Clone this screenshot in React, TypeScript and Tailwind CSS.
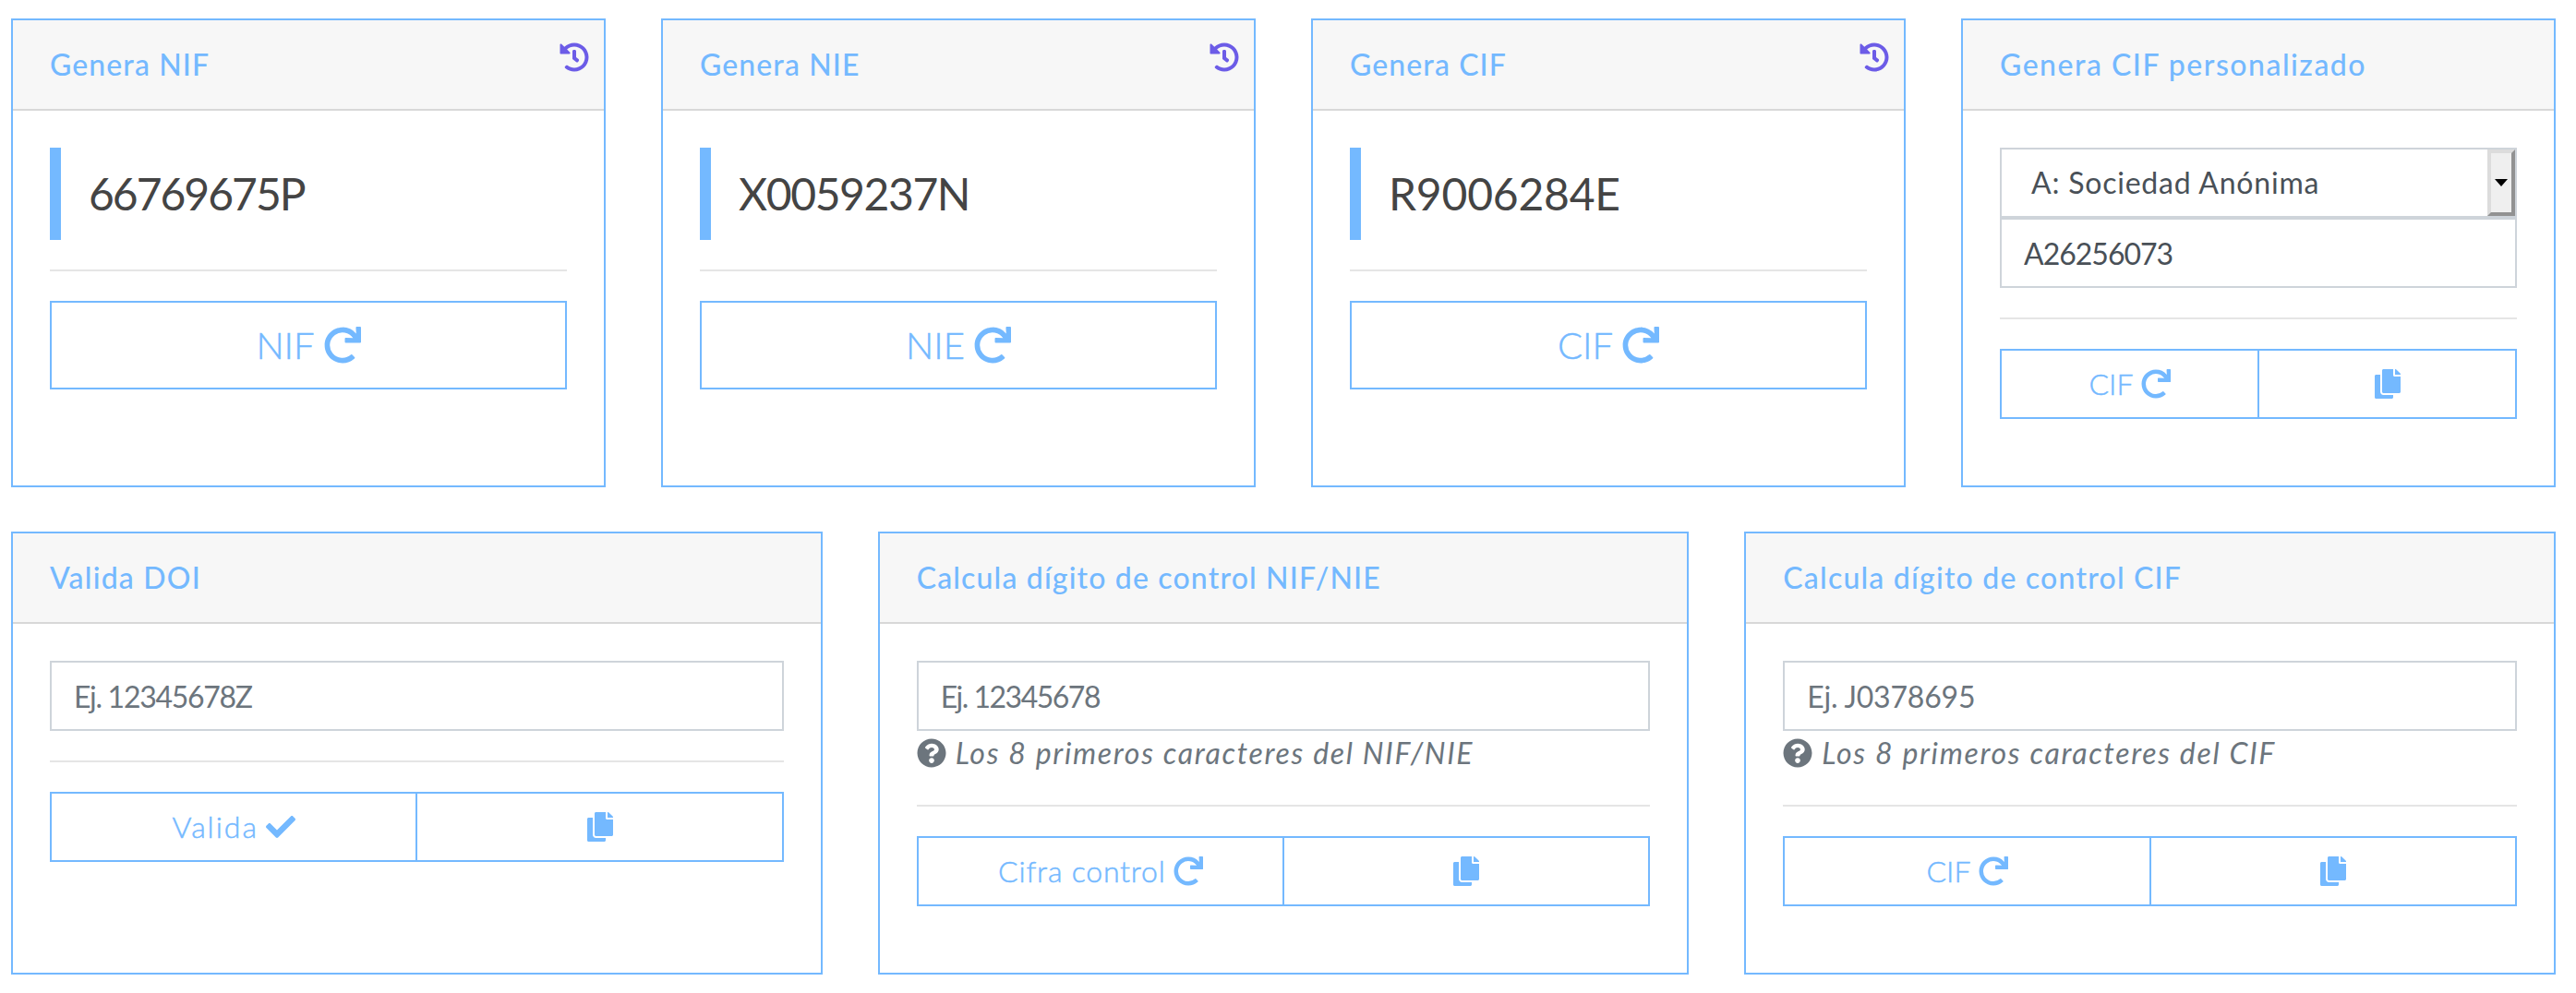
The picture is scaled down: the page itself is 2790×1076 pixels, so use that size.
import type { ReactNode } from 'react'
import { FaCheck, FaCopy, FaHistory, FaQuestionCircle, FaRedo } from 'react-icons/fa'

interface CardProps {
  title: string
  titleClass?: string
  history?: boolean
  children: ReactNode
}

function Card({ title, titleClass = 'tracking-[1.1px]', history = false, children }: CardProps) {
  return (
    <section className="relative min-w-0 flex-1 border-2 border-[#74b9ff] bg-white">
      <header className="flex h-[98px] items-center border-b-2 border-[#d8d8d8] bg-[#f7f7f7] px-10">
        <h2 className={`text-[32px] font-medium whitespace-nowrap text-[#74b9ff] ${titleClass}`}>{title}</h2>
      </header>
      {history && (
        <button className="absolute top-6 right-4 text-[#6c5ce7]">
          <FaHistory className="size-8" />
        </button>
      )}
      <div className="p-10">{children}</div>
    </section>
  )
}

function Divider() {
  return <hr className="my-8 border-t-2 border-[#e5e5e5]" />
}

function Generator({ label, value, valueClass }: { label: string; value: string; valueClass: string }) {
  return (
    <Card title={`Genera ${label}`} history>
      <blockquote className="flex h-[100px] items-center border-l-12 border-[#74b9ff] pl-[30px]">
        <p className={`text-[48px] text-[#444] ${valueClass}`}>{value}</p>
      </blockquote>
      <Divider />
      <button className="flex h-24 w-full items-center justify-center gap-2.5 border-2 border-[#74b9ff] text-[40px] font-light text-[#74b9ff]">
        <span className="[-webkit-text-stroke:0.5px_#74b9ff]">{label}</span>
        <FaRedo className="size-10" />
      </button>
    </Card>
  )
}

function Actions({ label, labelClass = '', icon }: { label: string; labelClass?: string; icon: ReactNode }) {
  return (
    <div className="flex h-[76px] text-[32px] font-light text-[#74b9ff]">
      <button className="flex flex-1 items-center justify-center gap-2 border-2 border-[#74b9ff]">
        <span className={`[-webkit-text-stroke:0.5px_#74b9ff] ${labelClass}`}>{label}</span>
        {icon}
      </button>
      <button className="-ml-0.5 flex flex-1 items-center justify-center border-2 border-[#74b9ff]">
        <FaCopy className="h-8 w-7" />
      </button>
    </div>
  )
}

function Field({ placeholder, value, className = '' }: { placeholder?: string; value?: string; className?: string }) {
  return (
    <input
      className={`block h-[76px] w-full border-2 border-[#ced4da] bg-white px-6 text-[32px] text-[#495057] placeholder:text-[#6c757d] ${className}`}
      placeholder={placeholder}
      defaultValue={value}
    />
  )
}

function Help({ children }: { children: ReactNode }) {
  return (
    <p className="flex h-12 items-center gap-2.5 text-[32px] tracking-[1.68px] whitespace-nowrap text-[#6c757d] italic">
      <FaQuestionCircle className="size-8" />
      <span>{children}</span>
    </p>
  )
}

export default function App() {
  return (
    <main className="h-[1076px] w-[2790px] bg-white pt-5 pr-[22px] pl-3 font-[Lato,sans-serif]">
      {/* Generadores */}
      <div className="flex h-[508px] gap-[60px]">
        <Generator label="NIF" value="66769675P" valueClass="tracking-[-2px]" />
        <Generator label="NIE" value="X0059237N" valueClass="tracking-[-1.4px]" />
        <Generator label="CIF" value="R9006284E" valueClass="tracking-[-0.2px]" />
        <Card title="Genera CIF personalizado" titleClass="tracking-[1.5px]">
          <div className="flex h-[76px] border-2 border-[#ced4da] text-[32px] text-[#495057]">
            <span className="flex flex-1 items-center pl-8 tracking-[0.78px]">A: Sociedad Anónima</span>
            <span className="flex w-[30px] items-center justify-center border-4 border-t-[#dcdcdc] border-r-[#929292] border-b-[#929292] border-l-[#dcdcdc] bg-[#efefef]">
              <svg viewBox="0 0 14 8" className="h-2 w-3.5 fill-black">
                <path d="M0 0h14L7 8z" />
              </svg>
            </span>
          </div>
          <Field value="A26256073" className="tracking-[-1px]" />
          <Divider />
          <Actions label="CIF" icon={<FaRedo className="size-8" />} />
        </Card>
      </div>

      {/* Validación y dígitos de control */}
      <div className="mt-12 flex h-[480px] gap-[60px]">
        <Card title="Valida DOI" titleClass="tracking-[1.2px]">
          <Field placeholder="Ej. 12345678Z" className="tracking-[-1.3px]" />
          <Divider />
          <Actions label="Valida" labelClass="tracking-[2px]" icon={<FaCheck className="size-8" />} />
        </Card>
        <Card title="Calcula dígito de control NIF/NIE" titleClass="tracking-[1.15px]">
          <Field placeholder="Ej. 12345678" className="tracking-[-1.5px]" />
          <Help>Los 8 primeros caracteres del NIF/NIE</Help>
          <Divider />
          <Actions label="Cifra control" labelClass="tracking-[0.8px]" icon={<FaRedo className="size-8" />} />
        </Card>
        <Card title="Calcula dígito de control CIF" titleClass="tracking-[1.2px]">
          <Field placeholder="Ej. J0378695" className="tracking-[-0.2px]" />
          <Help>Los 8 primeros caracteres del CIF</Help>
          <Divider />
          <Actions label="CIF" icon={<FaRedo className="size-8" />} />
        </Card>
      </div>
    </main>
  )
}
